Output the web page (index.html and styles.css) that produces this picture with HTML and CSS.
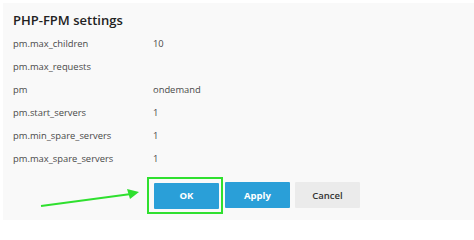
FILE: index.html
```html
<!DOCTYPE html>
<html>
<head>
<meta charset="utf-8">
<link rel="stylesheet" href="styles.css">
</head>
<body>
<div class="panel">
  <h1 class="title">PHP-FPM settings</h1>
  <div class="rows">
    <div class="row"><span class="label">pm.max_children</span><span class="value">10</span></div>
    <div class="row"><span class="label">pm.max_requests</span><span class="value"></span></div>
    <div class="row"><span class="label">pm</span><span class="value">ondemand</span></div>
    <div class="row"><span class="label">pm.start_servers</span><span class="value">1</span></div>
    <div class="row"><span class="label">pm.min_spare_servers</span><span class="value">1</span></div>
    <div class="row"><span class="label">pm.max_spare_servers</span><span class="value">1</span></div>
  </div>
  <div class="actions">
    <div class="highlight"><button class="btn primary">OK</button></div>
    <button class="btn primary apply">Apply</button>
    <button class="btn secondary">Cancel</button>
  </div>
  <svg class="arrow" width="110" height="24" viewBox="0 0 110 24">
    <line x1="2" y1="21" x2="92" y2="9" stroke="#2fe02f" stroke-width="2"/>
    <polygon points="100,7 88,4 91,14" fill="#2fe02f"/>
  </svg>
</div>
</body>
</html>
```
FILE: styles.css
```css
html, body { margin: 0; padding: 0; background: #ffffff; }
body { width: 474px; height: 225px; overflow: hidden; font-family: "Open Sans", sans-serif; color: #333; }
.panel {
  position: relative;
  margin: 3px 0 0 3px;
  height: 217px;
  background: #f9f9f9;
  padding: 8px 0 0 10px;
  box-sizing: border-box;
}
.title { margin: 0; font-size: 13px; font-weight: 600; line-height: 18px; color: #222; }
.rows { margin-top: 3px; }
.row { display: flex; height: 23px; align-items: center; font-size: 9.4px; color: #4a4a4a; }
.label { width: 140px; }
.actions { display: flex; align-items: center; margin-top: 7px; margin-left: 134px; }
.highlight { border: 2px solid #2fe02f; padding: 3px 2px 3px 5px; }
.apply { margin-left: 2px; }
.secondary { margin-left: 5px; }
.btn { font-family: "Open Sans", sans-serif; font-size: 9.5px; font-weight: 700; border: none; height: 26px; width: 65px; padding: 0; border-radius: 1px; }
.primary { background: #2a9fd8; color: #fff; }
.secondary { background: #ebebeb; color: #333; font-weight: 600; }
.arrow { position: absolute; left: 36px; top: 182px; }
```
